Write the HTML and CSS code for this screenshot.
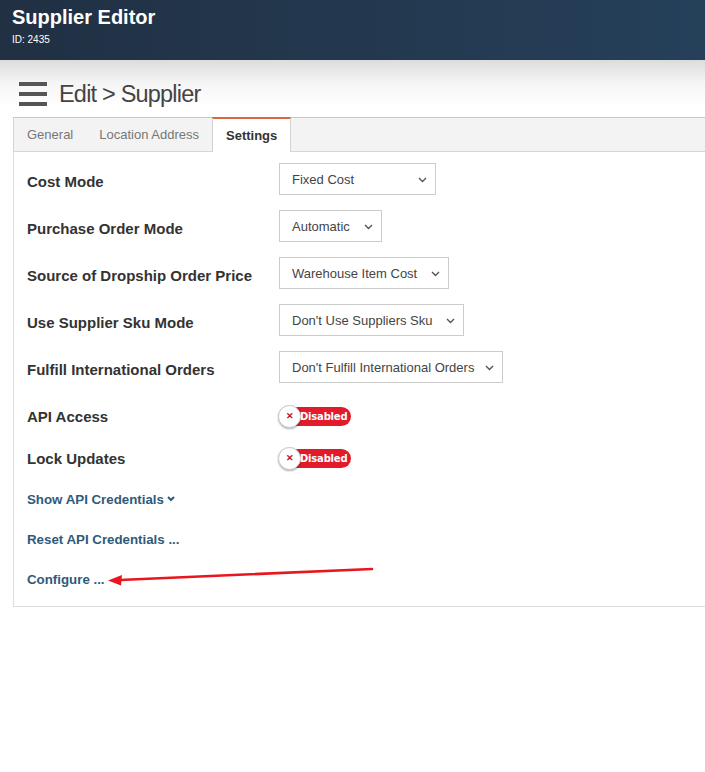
FILE: index.html
```
<!DOCTYPE html>
<html>
<head>
<meta charset="utf-8">
<link rel="stylesheet" href="styles.css">
</head>
<body>
<header class="topbar">
  <div class="title">Supplier Editor</div>
  <div class="subid">ID: 2435</div>
</header>
<main class="page">
  <div class="heading">
    <svg class="burger" width="28" height="24" viewBox="0 0 28 24"><rect x="0" y="0" width="28" height="4" fill="#555"/><rect x="0" y="10" width="28" height="4" fill="#555"/><rect x="0" y="20" width="28" height="4" fill="#555"/></svg>
    <h1>Edit &gt; Supplier</h1>
  </div>
  <section class="tabbox">
    <nav class="tabs">
      <div class="tab">General</div>
      <div class="tab">Location Address</div>
      <div class="tab active">Settings</div>
    </nav>
    <div class="panel">
      <div class="row sel-row">
        <div class="label">Cost Mode</div>
        <div class="select">Fixed Cost<span class="gap" style="width:64px"></span><svg class="chev" width="9" height="6" viewBox="0 0 9 6"><path d="M1 1l3.5 3.5L8 1" fill="none" stroke="#555" stroke-width="1.4"/></svg></div>
      </div>
      <div class="row sel-row">
        <div class="label">Purchase Order Mode</div>
        <div class="select">Automatic<span class="gap" style="width:14px"></span><svg class="chev" width="9" height="6" viewBox="0 0 9 6"><path d="M1 1l3.5 3.5L8 1" fill="none" stroke="#555" stroke-width="1.4"/></svg></div>
      </div>
      <div class="row sel-row">
        <div class="label">Source of Dropship Order Price</div>
        <div class="select">Warehouse Item Cost<span class="gap" style="width:14px"></span><svg class="chev" width="9" height="6" viewBox="0 0 9 6"><path d="M1 1l3.5 3.5L8 1" fill="none" stroke="#555" stroke-width="1.4"/></svg></div>
      </div>
      <div class="row sel-row">
        <div class="label">Use Supplier Sku Mode</div>
        <div class="select">Don't Use Suppliers Sku<span class="gap" style="width:13px"></span><svg class="chev" width="9" height="6" viewBox="0 0 9 6"><path d="M1 1l3.5 3.5L8 1" fill="none" stroke="#555" stroke-width="1.4"/></svg></div>
      </div>
      <div class="row sel-row">
        <div class="label">Fulfill International Orders</div>
        <div class="select">Don't Fulfill International Orders<span class="gap" style="width:11px"></span><svg class="chev" width="9" height="6" viewBox="0 0 9 6"><path d="M1 1l3.5 3.5L8 1" fill="none" stroke="#555" stroke-width="1.4"/></svg></div>
      </div>
      <div class="row tog-row">
        <div class="label">API Access</div>
        <div class="toggle"><span class="knob">&#x2715;</span><span class="tog-text">Disabled</span></div>
      </div>
      <div class="row tog-row last-tog">
        <div class="label">Lock Updates</div>
        <div class="toggle"><span class="knob">&#x2715;</span><span class="tog-text">Disabled</span></div>
      </div>
      <div class="row link-row"><a class="link">Show API Credentials <svg width="8" height="6" viewBox="0 0 8 6"><path d="M1 1l3 3 3-3" fill="none" stroke="#2f5a7a" stroke-width="2"/></svg></a></div>
      <div class="row link-row"><a class="link">Reset API Credentials ...</a></div>
      <div class="row link-row"><a class="link">Configure ...</a></div>
    </div>
  </section>
  <svg class="arrow" width="270" height="24" viewBox="0 0 270 24">
    <line x1="266" y1="3" x2="14" y2="14" stroke="#e8161e" stroke-width="2.6" stroke-linecap="round"/>
    <path d="M2 14.5 L16 9 L15 19.5 Z" fill="#e8161e"/>
  </svg>
</main>
</body>
</html>
```
FILE: styles.css
```
html, body {
  margin: 0;
  padding: 0;
  background: #fff;
  overflow: hidden;
  font-family: "Liberation Sans", Arial, sans-serif;
}

.topbar {
  height: 60px;
  box-sizing: border-box;
  padding: 5px 12px 0;
  background: linear-gradient(to right, #213043, #25405a);
  color: #fff;
}

.title {
  font-size: 20px;
  font-weight: bold;
  line-height: 24px;
}

.subid {
  font-size: 10px;
  line-height: 12px;
  margin-top: 5px;
}

.page {
  position: relative;
  background: linear-gradient(to bottom, #dcdcdc 0, #f4f4f4 22px, #fff 45px);
  padding-top: 20px;
  min-height: 700px;
}

.heading {
  display: flex;
  align-items: center;
  padding-left: 19px;
  height: 28px;
  margin-bottom: 9px;
}

.burger {
  display: block;
  margin-right: 12px;
}

h1 {
  margin: 0;
  font-size: 23.5px;
  font-weight: normal;
  color: #444;
  letter-spacing: -0.8px;
  line-height: 28px;
}

.tabbox {
  margin-left: 13px;
  width: 720px;
}

.tabs {
  display: flex;
  height: 35px;
  box-sizing: border-box;
  background: #f3f3f3;
  border-top: 1px solid #c8c8c8;
  border-left: 1px solid #d3d3d3;
  border-bottom: 1px solid #d6d6d6;
}

.tab {
  padding: 0 13px;
  font-size: 13px;
  color: #777;
  line-height: 33px;
}

.tab.active {
  background: #fff;
  color: #333;
  font-weight: bold;
  border-left: 1px solid #d3d3d3;
  border-right: 1px solid #d3d3d3;
  border-top: 2px solid #d9663f;
  margin-top: -1px;
  margin-bottom: -1px;
  line-height: 33px;
  padding: 0 13px 0 13px;
}

.panel {
  border-left: 1px solid #ddd;
  border-bottom: 1px solid #ddd;
  padding: 11px 0 7px 13px;
}

.row {
  display: flex;
  align-items: center;
}

.label {
  width: 252px;
  font-size: 15px;
  font-weight: bold;
  color: #333;
  padding-top: 4px;
}

.sel-row {
  height: 32px;
  margin-bottom: 15px;
}

.select {
  display: flex;
  align-items: center;
  height: 32px;
  box-sizing: border-box;
  border: 1px solid #ccc;
  background: #fff;
  padding: 0 8px 0 12px;
  font-size: 13px;
  color: #444;
}

.gap {
  display: inline-block;
}

.chev {
  display: block;
  margin-top: 1px;
}

.tog-row {
  height: 36px;
  margin-bottom: 6px;
}

.tog-row .label {
  padding-top: 0;
}

.last-tog {
  margin-bottom: 3px;
}

.toggle {
  position: relative;
  width: 72px;
  height: 19px;
  margin-top: 1px;
  background: #e21a2a;
  border-radius: 10px;
  box-sizing: border-box;
}

.knob {
  position: absolute;
  left: -1px;
  top: -2px;
  width: 21px;
  height: 21px;
  border-radius: 50%;
  background: #fff;
  border: 1px solid #c9c9c9;
  box-shadow: 0 1px 2px rgba(0,0,0,0.3);
  color: #b5122a;
  font-size: 9px;
  font-weight: bold;
  line-height: 21px;
  text-align: center;
}

.tog-text {
  position: absolute;
  left: 21px;
  top: 0;
  line-height: 19px;
  color: #fff;
  font-size: 10px;
  font-weight: bold;
  font-family: "DejaVu Sans", "Liberation Sans", sans-serif;
  letter-spacing: -0.2px;
}

.link-row {
  height: 40px;
}

.link {
  font-size: 13.3px;
  font-weight: bold;
  color: #2f5a7a;
  display: flex;
  align-items: center;
  gap: 3px;
}

.arrow {
  position: absolute;
  left: 106px;
  top: 506px;
}
```
